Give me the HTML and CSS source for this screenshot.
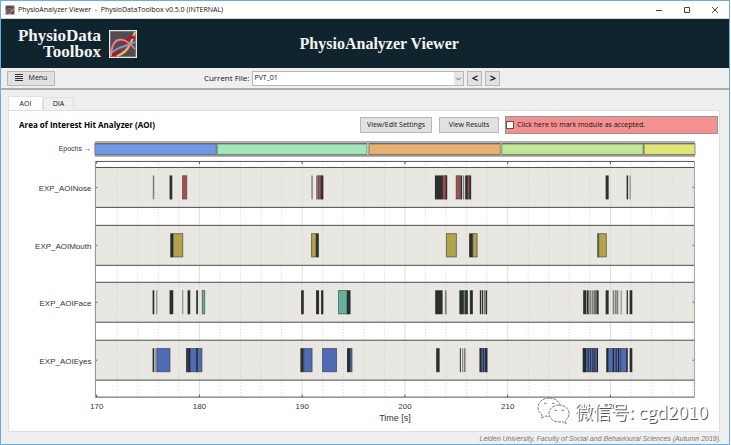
FILE: index.html
```html
<!DOCTYPE html>
<html lang="en">
<head>
<meta charset="utf-8">
<title>PhysioAnalyzer Viewer</title>
<link rel="stylesheet" href="styles.css">
</head>
<body>
<svg class="defs" aria-hidden="true">
  <symbol id="logo" viewBox="0 0 28 28">
    <rect class="logo-bg" x="1" y="1" width="26" height="26"/>
    <path d="M8 26C17 23 21 17 26 2" fill="none" stroke="#e5bb6a" stroke-width="2.2"/>
    <path d="M2 26C14 23 12 8 26 7" fill="none" stroke="#c90f12" stroke-width="2.4"/>
    <path d="M2 23C10 16 16 17 26 12" fill="none" stroke="#6d9bd0" stroke-width="2.2"/>
    <path d="M2 26C3 5 15 6 26 19" fill="none" stroke="#f07f83" stroke-width="1.8"/>
    <rect x=".6" y=".6" width="26.8" height="26.8" fill="none" stroke="#e6e8ea" stroke-width="1.3"/>
  </symbol>
</svg>
<div class="window">
  <header class="titlebar">
    <svg class="titlebar-icon"><use href="#logo"/></svg>
    <span class="titlebar-text">PhysioAnalyzer Viewer&nbsp; -&nbsp; PhysioDataToolbox v0.5.0 (INTERNAL)</span>
    <div class="window-controls">
      <button aria-label="Minimize"><svg viewBox="0 0 8 8"><path d="M1 4.5h6"/></svg></button>
      <button aria-label="Maximize"><svg viewBox="0 0 8 8"><path d="M1.5 1.5h5v5h-5z"/></svg></button>
      <button aria-label="Close"><svg viewBox="0 0 8 8"><path d="M1 1l6 6M7 1l-6 6"/></svg></button>
    </div>
  </header>
  <div class="banner">
    <div class="brand">
      <div class="brand-name">PhysioData<br>Toolbox</div>
      <svg class="brand-logo"><use href="#logo"/></svg>
    </div>
    <h1>PhysioAnalyzer Viewer</h1>
  </div>
  <div class="toolbar">
    <div><button class="btn menu-btn"><svg viewBox="0 0 8 8"><path d="M0 .5h8M0 2.5h8M0 4.5h8M0 6.5h8"/></svg>Menu</button></div>
    <div class="file-picker">
      <label for="file">Current File:</label>
      <div class="select-wrap">
        <select id="file"><option>PVT_01</option></select>
        <svg viewBox="0 0 9 13"><path d="M2 5.5l2.5 2.5L7 5.5"/></svg>
      </div>
      <button class="btn step-btn" aria-label="Previous file">&lt;</button>
      <button class="btn step-btn" aria-label="Next file">&gt;</button>
    </div>
  </div>
  <main class="content">
    <div class="tabs" role="tablist">
      <button class="tab active" role="tab" aria-selected="true">AOI</button>
      <button class="tab" role="tab" aria-selected="false">DIA</button>
    </div>
    <section class="panel">
      <div class="module-row">
        <h2>Area of Interest Hit Analyzer (AOI)</h2>
        <button class="btn settings-btn">View/Edit Settings</button>
        <button class="btn results-btn">View Results</button>
        <label class="accept"><input type="checkbox">Click here to mark module as accepted.</label>
      </div>
      <svg id="chart" class="chart" viewBox="9 135 711 296" role="img" aria-label="AOI hits over time"></svg>
    </section>
    <div class="watermark">
      <svg viewBox="0 0 34 28">
        <path d="M12.500 1C5.500 1 1 5.500 1 10.500c0 3 1.500 5.500 4 7l-.5 3.500 4-2 4 .7M12.500 1c5 0 9 2.500 10.500 6.500"/>
        <path d="M22 8c-5.500 0-10 3.700-10 8.500s4.500 8.500 10 8.500l3.500-.5 3.500 2.200-.5-3.400c2.300-1.600 3.500-4.200 3.500-6.800C32 11.700 27.500 8 22 8z"/>
        <path d="M7 6.500l1.500-.5 1 1M15 6.500l1.500-.5 1 1M17.500 13.500l1.500-.5 1 1M24.500 13.500l1.500-.5 1 1"/>
      </svg>
      <span>微信号: cgd2010</span>
    </div>
  </main>
  <footer>Leiden University, Faculty of Social and Behavioural Sciences (Autumn 2019).</footer>
</div>
<script src="chart.js"></script>
</body>
</html>
```
FILE: styles.css
```css
* { box-sizing: border-box; }
body {
  margin: 0;
  padding-right: 1px;
  font: 7px/12px "Open Sans", "Noto Sans", sans-serif;
  color: #111;
  background: #fff;
}
button, select, input { font: inherit; color: inherit; margin: 0; }
h1, h2 { margin: 0; }
.defs { position: absolute; width: 0; height: 0; }
.logo-bg { fill: #554a51; }
.window {
  display: flex;
  flex-direction: column;
  min-height: 100vh;
  border: 1px solid #69ade2;
  background: #efefef;
}
.titlebar {
  display: flex;
  align-items: center;
  height: 18px;
  padding: 0 4px;
  gap: 3px;
  background: #fff;
  border-bottom: 1px solid #d5d8da;
}
.titlebar-icon { width: 10px; height: 10px; }
.window-controls { display: flex; margin-left: auto; gap: 20px; padding-right: 6px; }
.window-controls button { display: flex; padding: 0; border: 0; background: none; }
.window-controls svg { width: 8px; height: 8px; fill: none; stroke: #444; }
.banner {
  display: grid;
  grid-template-columns: 40% auto;
  align-items: center;
  height: 49px;
  padding: 0 4px 0 15px;
  background: #10242e;
  color: #f4f4f4;
  font-family: "Liberation Serif", serif;
  font-weight: bold;
}
.brand { display: flex; align-items: center; gap: 8px; }
.brand-name { min-width: 85px; font-size: 17px; line-height: 16px; text-align: right; }
.brand-logo { width: 28px; height: 28px; }
h1 { font-size: 16px; line-height: 20px; }
.toolbar {
  display: grid;
  grid-template-columns: 27.5% 41.4% 1fr;
  align-items: center;
  height: 22px;
  padding: 0 6px;
  border-bottom: 2px solid #adadad;
}
.btn {
  display: inline-flex;
  align-items: center;
  justify-content: center;
  height: 15px;
  padding: 0;
  border: 1px solid #b8b8b8;
  background: #e1e1e1;
  white-space: nowrap;
}
.menu-btn { width: 48px; gap: 6px; }
.menu-btn svg { width: 8px; height: 8px; stroke: #333; fill: none; }
.toolbar > div { display: flex; }
.file-picker { align-items: center; gap: 3px; white-space: nowrap; }
.file-picker label { font-size: 8px; }
.select-wrap { position: relative; flex: 1; display: flex; }
.select-wrap select {
  width: 100%;
  height: 15px;
  padding: 0 1px;
  border: 1px solid #b8b8b8;
  border-radius: 0;
  background: #fff;
  appearance: none;
}
.select-wrap svg {
  position: absolute;
  top: 1px;
  right: 1px;
  width: 9px;
  height: 13px;
  background: #e6e6e6;
  fill: none;
  stroke: #666;
  pointer-events: none;
}
.step-btn { width: 15px; font-size: 11px; font-weight: bold; }
.content { position: relative; padding: 6px 9px 0 7px; }
.tabs { display: flex; align-items: flex-end; height: 14px; }
.tab {
  width: 31px;
  height: 13px;
  padding: 0;
  border: 1px solid #e0e0e0;
  border-bottom: 0;
  background: #f0f0f0;
}
.tab.active { width: 35px; height: 14px; background: #fff; }
.panel { border: 1px solid #dfdfdf; background: #fff; }
.module-row { display: flex; align-items: center; padding: 3px 1px 0 10px; height: 24px; }
h2 { font-size: 8px; line-height: 12px; color: #000; flex: 1; white-space: nowrap; }
.settings-btn { width: 72px; height: 16px; margin-right: 7px; }
.results-btn { width: 60px; height: 16px; margin-right: 6px; }
.accept {
  display: flex;
  align-items: center;
  gap: 3px;
  width: 213px;
  height: 18px;
  border: 1px solid #949494;
  background: #f49090;
  white-space: nowrap;
}
.accept input {
  appearance: none;
  width: 8px;
  height: 8px;
  border: 1px solid #555;
  background: #fff;
}
.chart { display: block; width: 100%; font-family: "Liberation Sans", sans-serif; }
.chart text { fill: #333; font-size: 8px; }
.chart .small { font-size: 7px; }
.chart .axis-title { font-size: 9px; }
.chart .mid { text-anchor: middle; }
.chart .end { text-anchor: end; }
.watermark {
  position: absolute;
  right: 21px;
  bottom: 7px;
  display: flex;
  align-items: center;
  gap: 4px;
  color: #fff;
  font: 18px/26px "Noto Sans CJK SC", sans-serif;
  text-shadow: 1px 1px 0 #555;
}
.watermark svg { width: 34px; height: 28px; fill: #fff; stroke: #777; stroke-width: 1; stroke-dasharray: 3 1; }
footer {
  margin-top: auto;
  padding-right: 8px;
  text-align: right;
  color: #777;
  font: italic 7px/11px "Liberation Sans", sans-serif;
}
```
FILE: chart.js
```js
const chart = document.getElementById("chart");
const parts = [];
const rect = (x, y, w, h, fill, extra = "") =>
  parts.push(`<rect x="${x}" y="${y}" width="${w}" height="${h}" fill="${fill}" ${extra}/>`);
const line = (x1, y1, x2, y2, stroke, extra = "") =>
  parts.push(`<path d="M${x1} ${y1}L${x2} ${y2}" stroke="${stroke}" ${extra}/>`);
const text = (x, y, s, cls) => parts.push(`<text x="${x}" y="${y}" class="${cls}">${s}</text>`);

const x0 = 95.5, x1 = 695.5, y0 = 161.5, y1 = 397.5;
const xOf = t => 96.8 + (t - 170) * 10.29;

// Epoch strip
rect(95, 141, 601, 16, "#b0b0b0");
line(95, 143.5, 696, 143.5, "#777");
line(95, 155.5, 696, 155.5, "#999");
[[95, 216.5, "#7397e8"], [217.5, 367.5, "#a1e7b9"], [369.5, 501, "#e7b172"],
 [502.5, 644, "#c2e795"], [645, 696, "#dfe577"]].forEach(([a, b, c], i) => {
  rect(a, 144, b - a, 10.5, c, 'stroke="#555" stroke-opacity=".6"');
  if (i === 1 || i === 2) line(b + 1, 143, b + 1, 155, "#eee");
});
text(91, 151.5, "Epochs →", "small end");

// Row bands
const rows = [["Nose", 167.5], ["Mouth", 225.5], ["Face", 282.5], ["Eyes", 340.5]];
rows.forEach(([, y]) => rect(x0, y, x1 - x0, 40, "#e8e7e2"));

// Grid
for (let t = 172; t < 229; t += 2) {
  const x = xOf(t);
  if (t % 10) line(x, y0, x, y1, "#d6d6d2", 'stroke-dasharray="1 2"');
  else line(x, y0, x, y1, "#dededb");
}
rows.forEach(([name, y]) => {
  line(x0, y, x1, y, "#4c4c4c");
  line(x0, y + 40, x1, y + 40, "#4c4c4c");
  line(x0, y + 20, x0 + 2, y + 20, "#666");
  line(x1 - 2, y + 20, x1, y + 20, "#666");
  text(91.5, y + 23.5, "EXP_AOI" + name, "end");
});
line(x0, y0, x1, y0, "#555");
line(x0, y1, x1, y1, "#555");
line(x0, y0, x0, y1, "#8c8c8c");
line(x1, y0, x1, y1, "#a5a5a5");
for (let t = 170; t <= 220; t += 10) {
  line(xOf(t), y0, xOf(t), y0 + 2.5, "#555");
  line(xOf(t), y1 - 2.5, xOf(t), y1, "#555");
  text(xOf(t), 409, t, "mid");
}
text(395.5, 421, "Time [s]", "axis-title mid");

// Hits: [start, end, kind], f = filled, d = dark cluster, g = faint line
const fills = ["#ad4b50", "#b3a34d", "#62b29d", "#4f6bb3"];
const hits = [
  [[152.5,154,"g"],[169.3,172,"d"],[182.3,186.5,"f"],[311.3,312.7,"g"],[316,318.3,"g"],[318.3,321,"f"],[321,323.3,"d"],
   [435,443,"d"],[443,447,"f"],[445.7,447,"d"],[456.3,460,"f"],[460.5,462.2,"d"],[463,464.3,"g"],[465.3,468,"d"],
   [468,469.7,"f"],[469.7,471.3,"d"],[606,609,"d"],[627,628.5,"d"],[630,631,"g"]],
  [[170,173,"d"],[173,182.5,"f"],[311.5,316,"f"],[316,318.7,"d"],[446.5,456.5,"f"],[469.3,473,"d"],[473,477.3,"f"],
   [597.7,599,"d"],[599,606.7,"f"]],
  [[152.3,154,"d"],[156,157,"g"],[169.3,173,"d"],[182,183,"g"],[187.3,190,"d"],[196,197.7,"d"],[202,204.5,"f"],
   [301,303.7,"d"],[316,319,"d"],[321,323.3,"d"],[338.5,347,"f"],[347,350.5,"d"],[435.3,442.7,"d"],[445,446.7,"g"],
   [459.5,464,"d"],[464,465.3,"f"],[465.3,468,"d"],[470,473,"d"],[480,481.3,"d"],[482,483.3,"d"],[484,485.3,"g"],[485.7,487.3,"d"],
   [583.5,586.5,"d"],[587,589,"d"],[589.7,591.5,"g"],[592,594,"g"],[594.7,596,"d"],[596.7,599,"d"],[606,609,"d"],
   [613,614.3,"g"],[615,616.3,"g"],[616.7,618.7,"g"],[621,622,"g"],[627,628.3,"d"],[630,632.7,"d"]],
  [[152.3,154,"d"],[155,156,"g"],[156.5,169.7,"f"],[186.5,201.7,"f"],[186,187.3,"d"],[188,190,"d"],[196,197.5,"d"],
   [300.3,303.7,"d"],[303.7,312,"f"],[322.5,336.5,"f"],[347,350,"d"],[350,352,"f"],[436.3,439.7,"d"],[460,461,"d"],
   [462.3,463.3,"g"],[464,465.7,"g"],[480,487.3,"f"],[480,481.7,"d"],[483,484,"d"],[485.3,487.3,"d"],
   [583.3,598,"f"],[583.3,586.5,"d"],[588,589,"d"],[590.5,591.3,"d"],[592.7,593.7,"d"],[594.7,595.7,"d"],[597,598.3,"d"],
   [607,627.5,"f"],[607,608.7,"d"],[613,614.3,"d"],[616,617,"d"],[618.3,619.5,"d"],[621,621.5,"d"],[626.7,628,"d"],[630,632.7,"d"]]
];
hits.forEach((list, i) => {
  const y = rows[i][1] + 8.3;
  list.forEach(([a, b, kind]) => {
    if (kind === "f") rect(a + .5, y, b - a, 23.3, fills[i], 'stroke="#333" stroke-opacity=".65" stroke-width=".9"');
    else rect(a + .5, y - .3, b - a, 24, kind === "d" ? "#222523" : "#777", 'fill-opacity=".95"');
  });
});
chart.innerHTML = parts.join("");
```
